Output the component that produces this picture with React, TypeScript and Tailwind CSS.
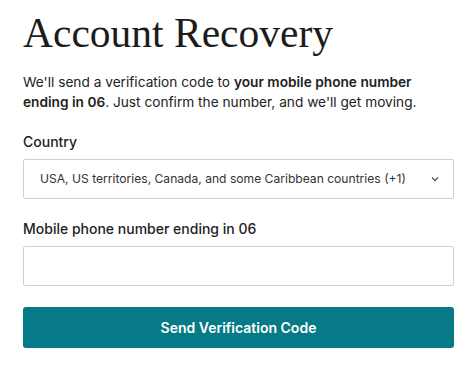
import { useState } from "react";

const sans = { fontFamily: "Inter, 'Liberation Sans', sans-serif" };

export default function App() {
  const [phone, setPhone] = useState("");

  return (
    <div className="w-[474px] h-[370px] bg-white pl-[23px] pr-[20px] pt-[9px] text-[#222]" style={sans}>
      {/* Heading */}
      <h1
        className="text-[41.5px] leading-[48px] text-[#1c1c1c] font-normal"
        style={{ fontFamily: "'Liberation Serif', serif" }}
      >
        Account Recovery
      </h1>

      <p className="mt-[15px] text-[13.7px] leading-[20px] text-[#222]">
        We'll send a verification code to <b className="font-semibold">your mobile phone number ending in 06</b>. Just confirm the number, and we'll get moving.
      </p>

      {/* Country */}
      <label className="block mt-[20px] text-[14px] leading-[20px] font-medium text-[#222]">Country</label>
      <div className="mt-[7px] h-[40px] border border-[#cfcfcf] rounded-[2px] flex items-center justify-between pl-[16px] pr-[14px]">
        <span className="text-[12.1px] whitespace-nowrap text-[#333]">USA, US territories, Canada, and some Caribbean countries (+1)</span>
        <svg width="8" height="6" viewBox="0 0 8 6" className="text-[#555]">
          <path d="M1 1.5 L4 4.5 L7 1.5" fill="none" stroke="currentColor" strokeWidth="1.3" />
        </svg>
      </div>

      {/* Phone */}
      <label className="block mt-[20px] text-[14px] leading-[20px] font-medium text-[#222]">Mobile phone number ending in 06</label>
      <input
        value={phone}
        onChange={(e) => setPhone(e.target.value)}
        className="mt-[7px] block w-full h-[40px] border border-[#cfcfcf] rounded-[2px] px-3 text-[14px] outline-none"
      />

      <button className="mt-[21px] w-full h-[41px] rounded-[3px] bg-[#067a86] text-white text-[14px] font-semibold">
        Send Verification Code
      </button>
    </div>
  );
}
